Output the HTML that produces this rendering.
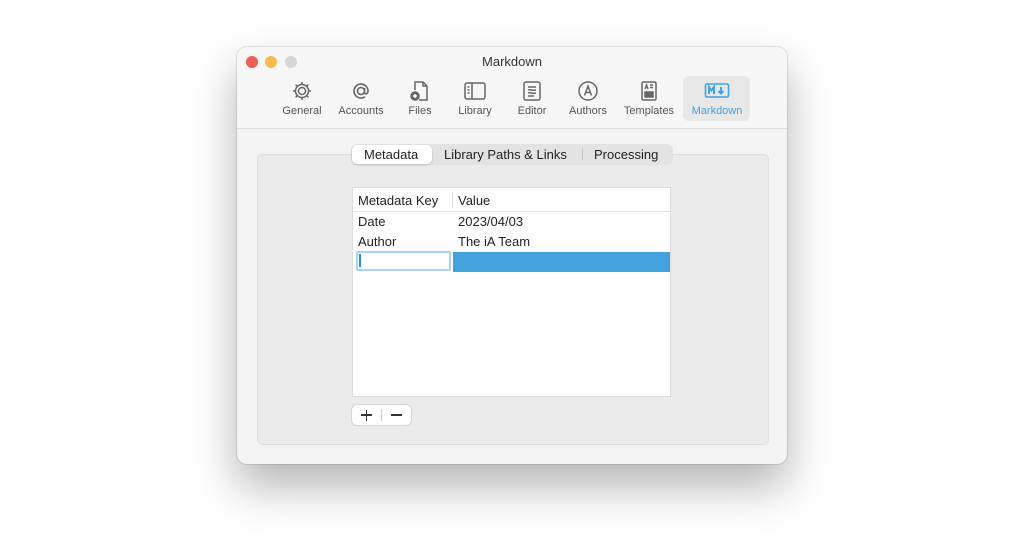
<!DOCTYPE html>
<html><head><style>
body{margin:0;width:1024px;height:547px;background:#fff;font-family:"Liberation Sans",sans-serif;position:relative;overflow:hidden}
.win{position:absolute;left:237px;top:47px;width:550px;height:417px;background:#f3f3f3;border-radius:10px;box-shadow:0 22px 45px rgba(0,0,0,.3),0 0 0 1px rgba(0,0,0,.1)}
.tb{position:absolute;left:0;top:0;width:550px;height:81px;background:#f7f7f7;border-bottom:1px solid #dcdcdc;border-radius:10px 10px 0 0}
.dot{position:absolute;top:9px;width:12px;height:12px;border-radius:50%}
.title{position:absolute;top:7px;width:100%;text-align:center;font-size:13px;color:#333}
.it{position:absolute;top:33px;text-align:center;font-size:11px;color:#555;width:60px}
.it svg{display:block;margin:0 auto 3px}
.sel{position:absolute;left:446px;top:29px;width:67px;height:45px;background:#e8e8e8;border-radius:6px}
.box{position:absolute;left:20px;top:107px;width:510px;height:289px;background:#ebebeb;border:1px solid #dedede;border-radius:5px}
.seg{position:absolute;left:114px;top:97px;width:322px;height:21px;background:#e3e3e3;border-radius:6px;font-size:13px;color:#222}
.seg span{position:absolute;top:3px}
.segsel{position:absolute;left:1px;top:1px;width:80px;height:19px;background:#fff;border-radius:5px;box-shadow:0 1px 2px rgba(0,0,0,.2)}
.tbl{position:absolute;left:115px;top:140px;width:317px;height:208px;background:#fff;border:1px solid #ddd;font-size:13px;color:#222}
.tbl div{position:absolute}
.btns{position:absolute;left:115px;top:358px;width:59px;height:20px;background:#fff;border-radius:5px;box-shadow:0 0 0 1px #d6d6d6;color:#333}
</style></head><body>
<div class="win">
<div class="tb">
<div class="dot" style="left:9px;background:#ec5f56"></div>
<div class="dot" style="left:28px;background:#f5bd4f"></div>
<div class="dot" style="left:48px;background:#d6d6d6"></div>
<div class="title">Markdown</div>
<div class="sel"></div>
<div class="it" style="left:35px"><svg width="22" height="22" viewBox="0 0 22 22" fill="none" stroke="#666" stroke-width="1.5"><circle cx="11" cy="11" r="3.5"/><path d="M11 2v3M11 17v3M2 11h3M17 11h3M4.6 4.6l2.1 2.1M15.3 15.3l2.1 2.1M4.6 17.4l2.1-2.1M15.3 6.7l2.1-2.1"/><circle cx="11" cy="11" r="6.5"/></svg>General</div>
<div class="it" style="left:94px"><svg width="22" height="22" viewBox="0 0 22 22" fill="none" stroke="#666" stroke-width="1.6"><circle cx="11" cy="11" r="3.5"/><path d="M14.5 8v4.5c0 2 3.5 2 3.5-1.5a7 7 0 1 0-3 5.8"/></svg>Accounts</div>
<div class="it" style="left:153px"><svg width="22" height="22" viewBox="0 0 22 22" fill="none" stroke="#666" stroke-width="1.5"><path d="M6 10V2h8l4 4v14H10"/><path d="M14 2v4h4"/><circle cx="6" cy="16" r="4" fill="#666"/><path d="M6 14v4M4 16h4" stroke="#fff"/></svg>Files</div>
<div class="it" style="left:208px"><svg width="24" height="22" viewBox="0 0 24 22" fill="none" stroke="#666" stroke-width="1.5"><rect x="2" y="3" width="20" height="16" rx="2"/><path d="M9 3v16M4.5 7h2M4.5 10h2M4.5 13h2"/></svg>Library</div>
<div class="it" style="left:265px"><svg width="22" height="22" viewBox="0 0 22 22" fill="none" stroke="#666" stroke-width="1.5"><rect x="3" y="2" width="16" height="18" rx="2"/><path d="M7 7h8M7 10c2-1 4 1 8 0M7 13c2-1 4 1 8 0M7 16h6"/></svg>Editor</div>
<div class="it" style="left:321px"><svg width="22" height="22" viewBox="0 0 22 22" fill="none" stroke="#666" stroke-width="1.5"><circle cx="11" cy="11" r="9"/><path d="M7.5 15.5L11 6l3.5 9.5M8.7 12.5h4.6"/></svg>Authors</div>
<div class="it" style="left:382px"><svg width="22" height="22" viewBox="0 0 22 22" fill="none" stroke="#666" stroke-width="1.5"><rect x="4" y="2" width="14" height="18" rx="1.5"/><path d="M7 9l1.5-4 1.5 4M12 5h3M12 7.5h3"/><rect x="7" y="12" width="8" height="5" fill="#666"/></svg>Templates</div>
<div class="it" style="left:450px;color:#3fa3e5"><svg width="26" height="22" viewBox="0 0 26 22" fill="none" stroke="#3fa3e5" stroke-width="1.6"><rect x="1.5" y="4" width="23" height="13" rx="1.5"/><path d="M5 14V7l2.5 3.5L10 7v7M17 7v6M14.5 11l2.5 2.5 2.5-2.5" stroke-width="2"/></svg>Markdown</div>
</div>
<div class="box"></div>
<div class="seg"><div class="segsel"></div>
<span style="left:13px">Metadata</span><span style="left:93px">Library Paths &amp; Links</span><span style="left:231px;top:4px;width:1px;height:12px;background:#c8c8c8"></span><span style="left:243px">Processing</span></div>
<div class="tbl">
<div style="left:5px;top:5px">Metadata Key</div><div style="left:99px;top:4px;width:1px;height:16px;background:#ddd"></div><div style="left:105px;top:5px">Value</div>
<div style="left:0;top:23px;width:317px;height:1px;background:#e4e4e4"></div>
<div style="left:5px;top:26px">Date</div><div style="left:105px;top:26px">2023/04/03</div>
<div style="left:5px;top:46px">Author</div><div style="left:105px;top:46px">The iA Team</div>
<div style="left:100px;top:64px;width:217px;height:20px;background:#43a1dc"></div>
<div style="left:3px;top:63px;width:91px;height:16px;background:#fff;border:2px solid #a9d3f3;border-radius:2px"></div>
<div style="left:6px;top:66px;width:2px;height:13px;background:#1e8be0"></div>
</div>
<div class="btns">
<span style="position:absolute;left:9px;top:9px;width:11px;height:1.5px;background:#333"></span>
<span style="position:absolute;left:13.75px;top:4.5px;width:1.5px;height:11px;background:#333"></span>
<span style="position:absolute;left:29px;top:4px;width:1px;height:12px;background:#ccc"></span>
<span style="position:absolute;left:39px;top:9px;width:11px;height:1.5px;background:#333"></span></div>
</div>
</body></html>
